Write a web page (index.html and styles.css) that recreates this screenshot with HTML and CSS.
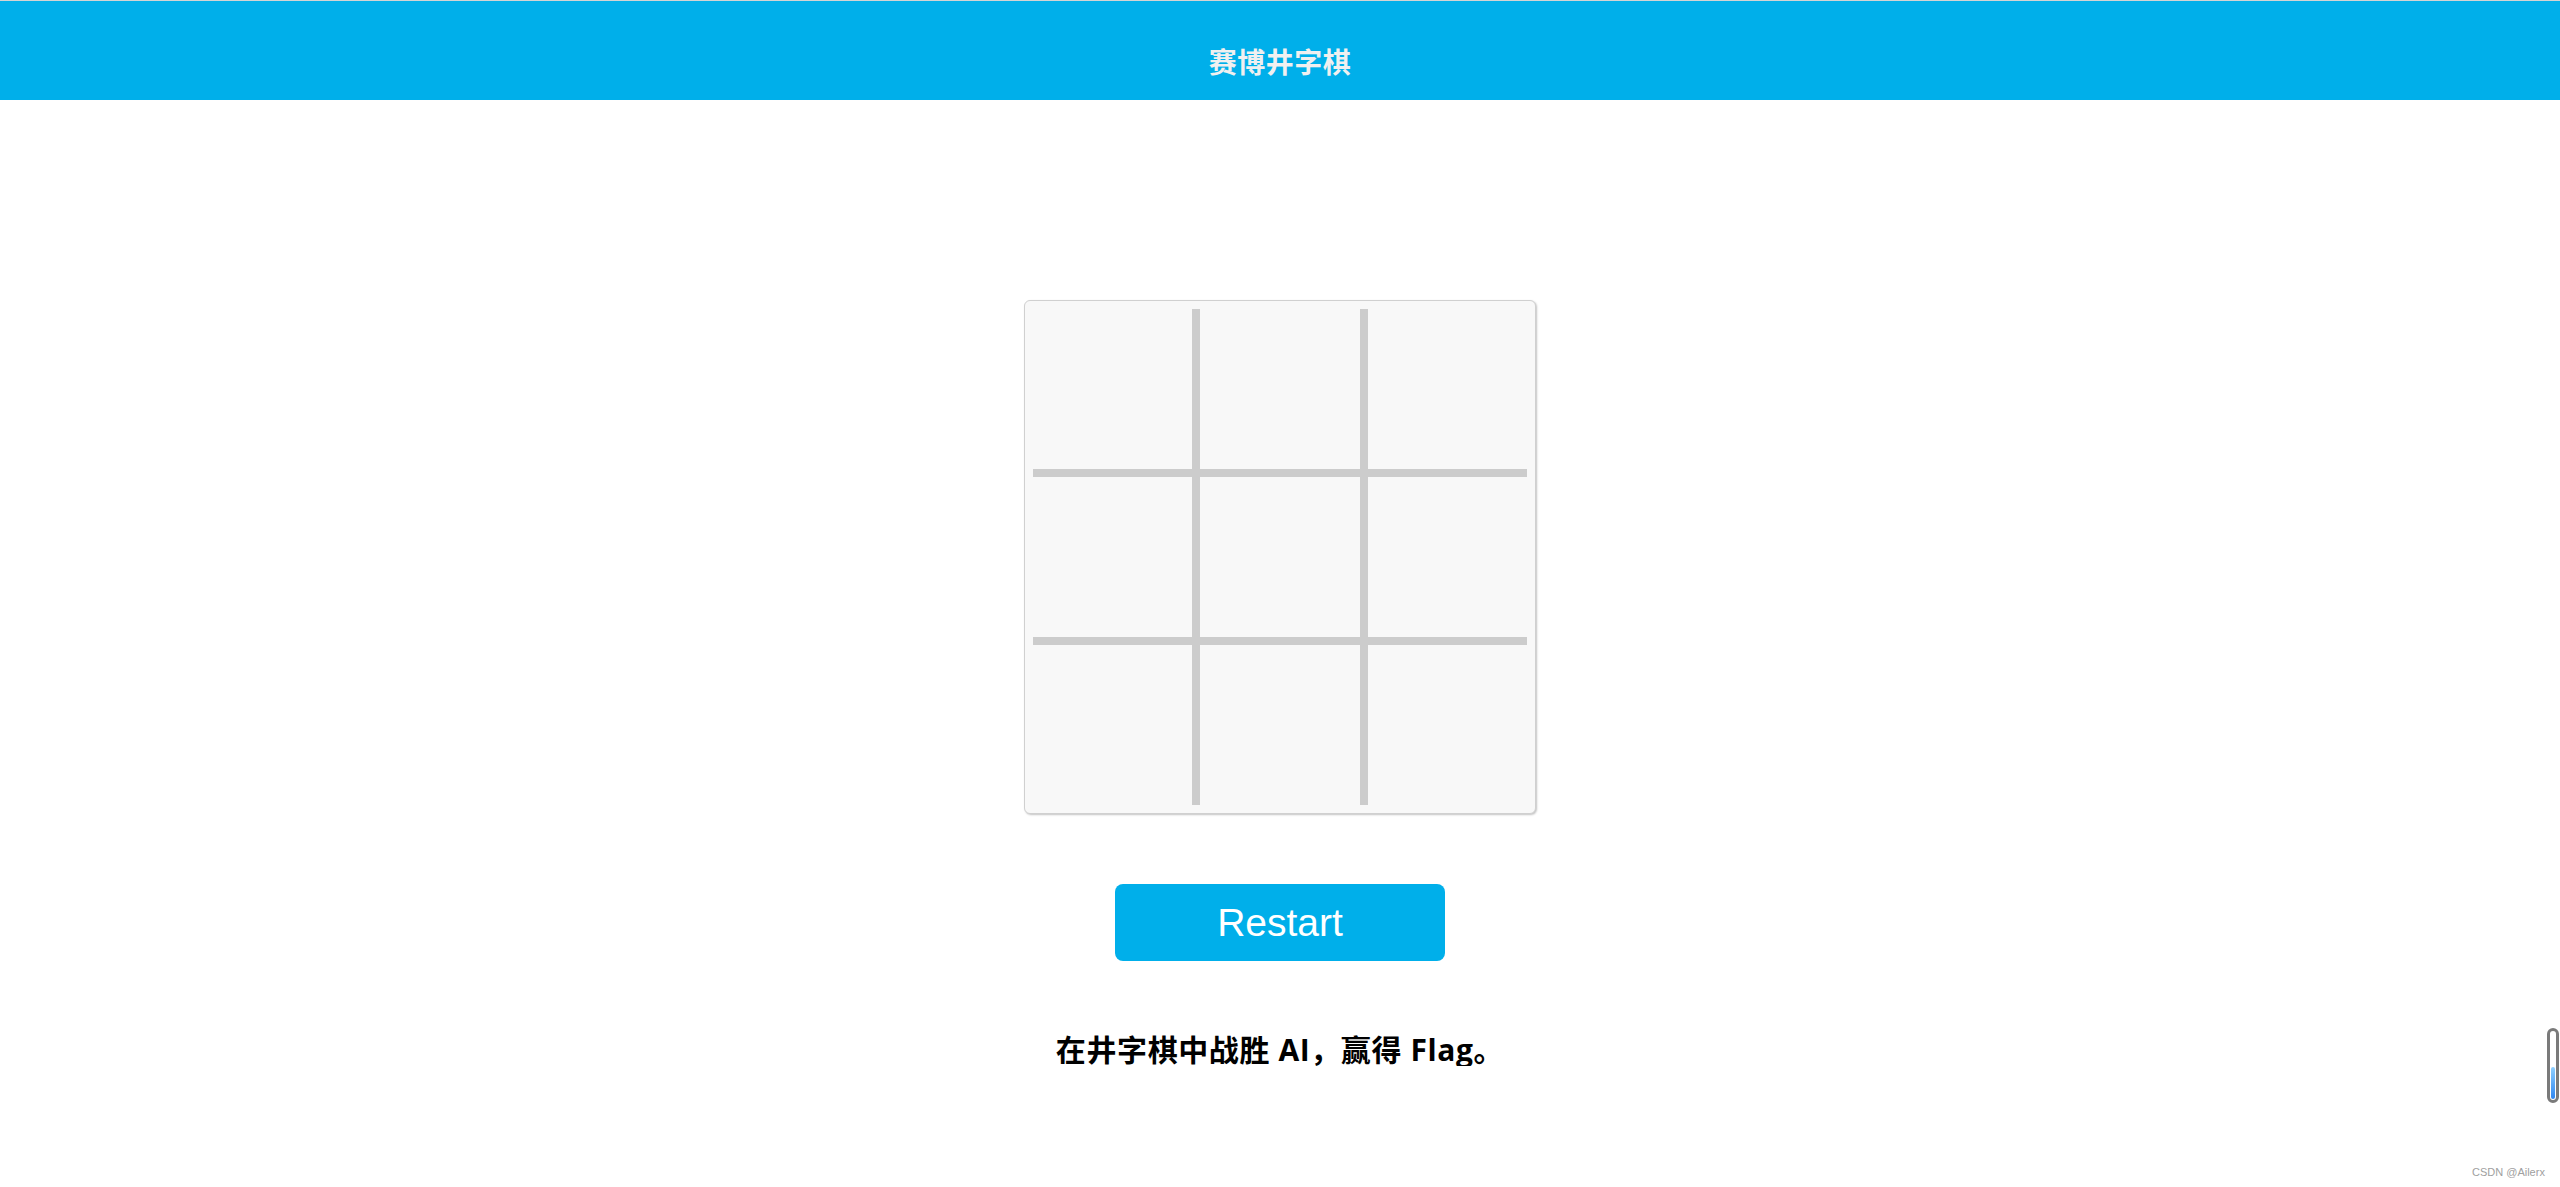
FILE: index.html
```html
<!DOCTYPE html>
<html lang="zh-CN">
<head>
    <meta charset="UTF-8">
    <title>赛博井字棋</title>
    <link rel="stylesheet" href="styles.css">
</head>
<body>
    <div class="header">赛博井字棋</div>
    <div class="main">
        <div class="board" id="board">
            <div class="cell"></div>
            <div class="cell"></div>
            <div class="cell"></div>
            <div class="cell"></div>
            <div class="cell"></div>
            <div class="cell"></div>
            <div class="cell"></div>
            <div class="cell"></div>
            <div class="cell"></div>
        </div>
        <button class="restart" id="restart">Restart</button>
        <p class="tip">在井字棋中战胜 AI，赢得 Flag。</p>
    </div>
    <div class="meter"><span></span></div>
    <div class="mark">CSDN @Ailerx</div>
</body>
</html>
```

FILE: styles.css
```css
* {
    margin: 0;
    padding: 0;
    box-sizing: border-box;
}
body {
    font-family: "Noto Sans CJK SC", "Liberation Sans", sans-serif;
    background-color: #fff;
}
.header {
    height: 100px;
    border-top: 1px solid #d4d4d4;
    background-color: #00afea;
    color: #f0f0f0;
    font-size: 28px;
    font-weight: 700;
    line-height: 28px;
    text-align: center;
    padding-top: 46px;
    letter-spacing: 0.5px;
}
.main {
    display: flex;
    flex-direction: column;
    align-items: center;
    padding-top: 200px;
}
.board {
    position: relative;
    width: 512px;
    height: 514px;
    padding: 8px;
    border: 1px solid #d0d0d0;
    border-radius: 6px;
    background-color: #f8f8f8;
    background-image: linear-gradient(#ccc, #ccc);
    background-origin: content-box;
    background-clip: border-box;
    background-repeat: no-repeat;
    background-size: 100% 100%;
    box-shadow: 1px 1px 2px #c4c4c4;
    display: grid;
    grid-template-columns: repeat(3, 1fr);
    grid-template-rows: repeat(3, 1fr);
    gap: 8px;
}
.cell {
    background-color: #f8f8f8;
}
.restart {
    margin-top: 70px;
    width: 330px;
    height: 77px;
    border: none;
    border-radius: 8px;
    background-color: #00afea;
    color: #fff;
    font-family: "Liberation Sans", Arial, sans-serif;
    font-size: 39px;
    cursor: pointer;
}
.tip {
    margin-top: 73px;
    font-family: "Open Sans", "Noto Sans CJK SC", sans-serif;
    font-size: 30px;
    line-height: 32px;
    font-weight: 700;
    letter-spacing: 0.6px;
    color: #000;
}
.meter {
    position: absolute;
    left: 2547px;
    top: 1028px;
    width: 12px;
    height: 75px;
    border: 3px solid #7a7a7a;
    border-radius: 6px;
    background-color: #fff;
    display: flex;
    flex-direction: column;
    justify-content: flex-end;
    padding: 1px;
}
.meter span {
    display: block;
    height: 32px;
    border-radius: 2px;
    background: linear-gradient(#8fd0ff, #2f86f0);
}
.mark {
    position: absolute;
    left: 2472px;
    top: 1166px;
    font-family: "Liberation Sans", Arial, sans-serif;
    font-size: 11px;
    color: #a0a0a0;
}
```
